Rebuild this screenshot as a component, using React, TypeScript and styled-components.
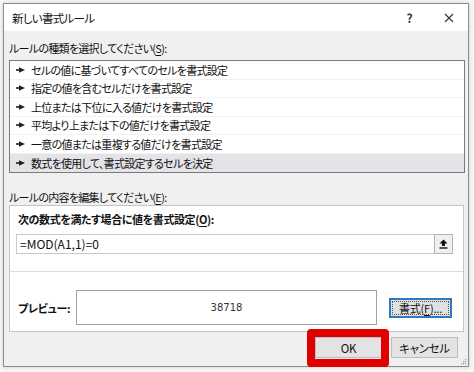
import React, { FC } from 'react'
import styled, { createGlobalStyle } from 'styled-components'

const GlobalStyle = createGlobalStyle`
	html, body {
		margin: 0;
		padding: 0;
		background: #f7f7f7;
	}
	body {
		font-family: 'Noto Sans CJK JP', 'Noto Sans', sans-serif;
		font-feature-settings: 'palt';
		font-size: 11px;
		letter-spacing: -0.7px;
		color: #111;
	}
`

const Page = styled.div`
	width: 474px;
	height: 372px;
	padding: 3px 0 0 3px;
	box-sizing: border-box;
	overflow: hidden;
`

const Dialog = styled.div`
	position: relative;
	width: 466px;
	height: 364px;
	box-sizing: border-box;
	border: 1px solid #8c8c8c;
	background: #f0f0f0;
	display: flex;
	flex-direction: column;
	box-shadow: 0 0 4px rgb(0 0 0 / 18%);
`

const TitleBar = styled.div`
	height: 27px;
	background: #fff;
	display: flex;
	align-items: center;
	padding: 0 14px 0 8px;
	font-size: 11.5px;
`

const Title = styled.span`
	flex: 1;
`

const HelpMark = styled.span`
	font-size: 12px;
	font-weight: bold;
	color: #333;
	margin-right: 32px;
`

const Body = styled.div`
	flex: 1;
	display: flex;
	flex-direction: column;
	padding: 9px 3px 0 5px;
`

const SectionLabel = styled.div<{ $gap?: number }>`
	line-height: 16px;
	margin-top: ${p => p.$gap ?? 0}px;
	margin-bottom: ${p => (p.$gap ? 0 : 4)}px;
`

const Key = styled.span`
	text-decoration: underline;
	text-underline-offset: 2px;
`

const RuleList = styled.div`
	border: 1px solid #7a7a7a;
	background: #fff;
	display: flex;
	flex-direction: column;
`

const RuleRow = styled.div<{ $selected?: boolean }>`
	height: 18.5px;
	box-sizing: border-box;
	display: flex;
	align-items: center;
	gap: 6px;
	padding-left: 6px;
	background: ${p => (p.$selected ? '#e3e3e8' : '#fff')};
	border-bottom: 1px solid ${p => (p.$selected ? '#e3e3e8' : '#f2f2f2')};
	&:last-child {
		border-bottom: none;
	}
`

const Panel = styled.div`
	border: 1px solid #c4c4c4;
	background: #fff;
	display: flex;
	flex-direction: column;
	margin-right: 1px;
`

const FormulaArea = styled.div`
	padding: 5px 10px 17px 6px;
	border-bottom: 1px solid #dcdcdc;
`

const BoldLabel = styled.div`
	font-weight: bold;
	letter-spacing: -0.4px;
	line-height: 16px;
	padding-left: 2px;
	margin-bottom: 7px;
`

const Input = styled.div`
	height: 20px;
	box-sizing: border-box;
	border: 1px solid #c8c8c8;
	display: flex;
	align-items: stretch;
`

const InputText = styled.span`
	flex: 1;
	font-size: 12px;
	letter-spacing: 0;
	line-height: 18px;
	padding-left: 3px;
`

const CollapseButton = styled.div`
	width: 19px;
	box-sizing: border-box;
	border: 1px solid #b4b4b4;
	background: #f0f0f0;
	display: flex;
	align-items: center;
	justify-content: center;
	margin: -1px -1px -1px 0;
`

const PreviewArea = styled.div`
	display: flex;
	align-items: center;
	padding: 18px 12px 6px 8px;
`

const PreviewLabel = styled.span`
	width: 58px;
	flex-shrink: 0;
	white-space: nowrap;
	font-weight: bold;
	letter-spacing: -0.3px;
`

const PreviewBox = styled.div`
	width: 301px;
	height: 35px;
	flex-shrink: 0;
	box-sizing: border-box;
	border: 1px solid #a0a0a0;
	display: flex;
	align-items: center;
	justify-content: center;
	font-family: 'DejaVu Sans', sans-serif;
	font-size: 10px;
	letter-spacing: 0;
	color: #333;
	margin-right: 12px;
`

const FormatButton = styled.div`
	width: 63px;
	height: 20px;
	flex-shrink: 0;
	box-sizing: border-box;
	border: 2px solid #2f78c4;
	background: #e1e1e1;
	display: flex;
	align-items: center;
	justify-content: center;
	letter-spacing: -0.2px;
	outline: 1px dotted #555;
	outline-offset: -4px;
`

const Footer = styled.div`
	display: flex;
	justify-content: flex-end;
	gap: 9px;
	padding: 5px 7px 0 0;
`

const PushButton = styled.div`
	position: relative;
	width: 67px;
	height: 21px;
	box-sizing: border-box;
	border: 1px solid #bdbdbd;
	background: #e3e3e3;
	display: flex;
	align-items: center;
	justify-content: center;
	font-size: 11.5px;
	letter-spacing: -0.3px;
`

const Highlight = styled.div`
	position: absolute;
	left: -9px;
	top: -9px;
	right: -8px;
	bottom: -10px;
	border: 8px solid #e00000;
	border-radius: 4px;
	pointer-events: none;
`

const Grip = styled.svg`
	position: absolute;
	right: 1px;
	bottom: 1px;
`

const Arrow: FC = () => (
	<svg width="9" height="6" viewBox="0 0 9 6">
		<rect x="0" y="2.2" width="4" height="1.6" fill="#222" />
		<polygon points="3,0.3 9,3 3,5.7" fill="#222" />
	</svg>
)

const CloseIcon: FC = () => (
	<svg width="10" height="10" viewBox="0 0 10 10">
		<path d="M1 1L9 9M9 1L1 9" stroke="#333" strokeWidth="1.1" />
	</svg>
)

const UpIcon: FC = () => (
	<svg width="9" height="10" viewBox="0 0 9 10">
		<polygon points="4.5,0.5 8.5,4.5 6,4.5 6,7 3,7 3,4.5 0.5,4.5" fill="#111" />
		<rect x="0.5" y="8.3" width="8" height="1.4" fill="#111" />
	</svg>
)

interface IRule {
	text: string
	selected?: boolean
}

const rules: IRule[] = [
	{ text: 'セルの値に基づいてすべてのセルを書式設定' },
	{ text: '指定の値を含むセルだけを書式設定' },
	{ text: '上位または下位に入る値だけを書式設定' },
	{ text: '平均より上または下の値だけを書式設定' },
	{ text: '一意の値または重複する値だけを書式設定' },
	{ text: '数式を使用して、書式設定するセルを決定', selected: true },
]

const Label: FC<{ before: string; k: string; gap?: number }> = ({ before, k, gap }) => (
	<SectionLabel $gap={gap}>
		{before}(<Key>{k}</Key>):
	</SectionLabel>
)

const App: FC = () => (
	<Page>
		<GlobalStyle />
		<Dialog>
			<TitleBar>
				<Title>新しい書式ルール</Title>
				<HelpMark>?</HelpMark>
				<CloseIcon />
			</TitleBar>
			<Body>
				<Label before="ルールの種類を選択してください" k="S" />
				<RuleList>
					{rules.map(rule => (
						<RuleRow key={rule.text} $selected={rule.selected}>
							<Arrow />
							<span>{rule.text}</span>
						</RuleRow>
					))}
				</RuleList>
				<Label before="ルールの内容を編集してください" k="E" gap={16} />
				<Panel>
					<FormulaArea>
						<BoldLabel>
							次の数式を満たす場合に値を書式設定(<Key>O</Key>):
						</BoldLabel>
						<Input>
							<InputText>=MOD(A1,1)=0</InputText>
							<CollapseButton>
								<UpIcon />
							</CollapseButton>
						</Input>
					</FormulaArea>
					<PreviewArea>
						<PreviewLabel>プレビュー:</PreviewLabel>
						<PreviewBox>38718</PreviewBox>
						<FormatButton>
							書式(<Key>F</Key>)...
						</FormatButton>
					</PreviewArea>
				</Panel>
				<Footer>
					<PushButton>
						OK
						<Highlight />
					</PushButton>
					<PushButton>キャンセル</PushButton>
				</Footer>
			</Body>
			<Grip width="6" height="6" viewBox="0 0 6 6">
				<rect x="4" y="0" width="1.2" height="1.2" fill="#999" />
				<rect x="2" y="2" width="1.2" height="1.2" fill="#999" />
				<rect x="4" y="2" width="1.2" height="1.2" fill="#999" />
				<rect x="0" y="4" width="1.2" height="1.2" fill="#999" />
				<rect x="2" y="4" width="1.2" height="1.2" fill="#999" />
				<rect x="4" y="4" width="1.2" height="1.2" fill="#999" />
			</Grip>
		</Dialog>
	</Page>
)

export default App
